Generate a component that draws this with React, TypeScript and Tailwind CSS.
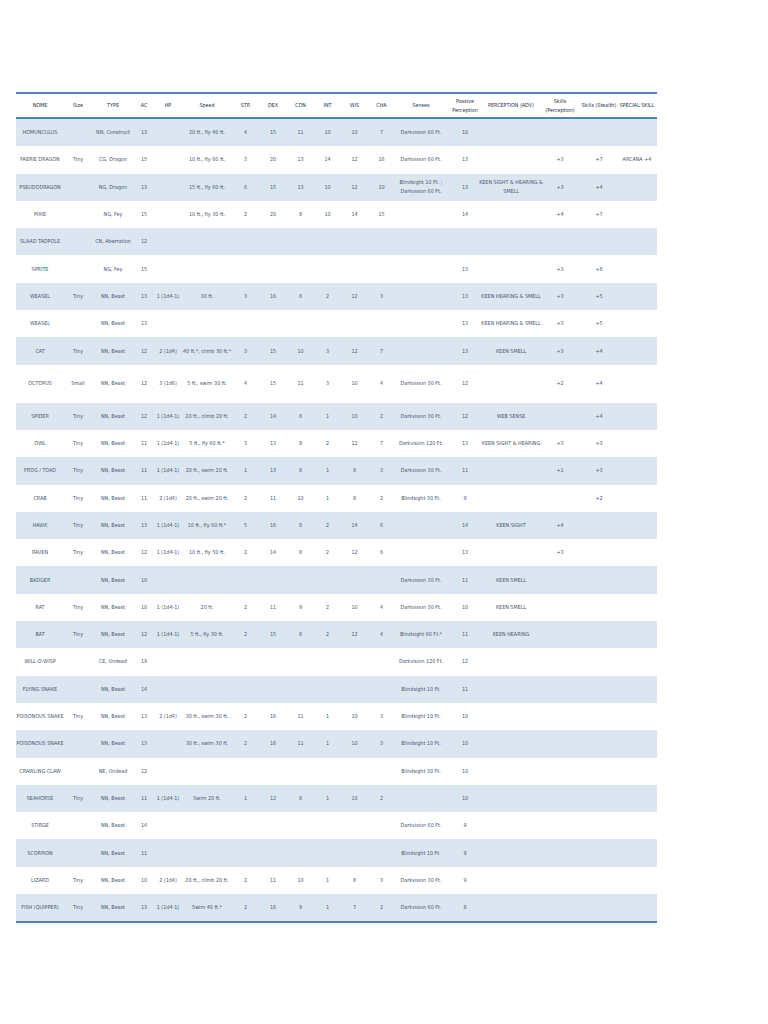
type Row = {
  name: string;
  size?: string;
  type: string;
  ac: string;
  hp?: string;
  speed?: string;
  stats?: string[];
  senses?: string[];
  pp?: string;
  adv?: string[];
  skp?: string;
  sks?: string;
  spec?: string;
  tall?: boolean;
};

const cols = "grid grid-cols-[48px_28px_42px_20px_28px_50px_27px_28px_27px_27px_27px_27px_52px_36px_56px_42px_36px_40px]";

const headers: string[][] = [
  ["NOME"], ["Size"], ["TYPE"], ["AC"], ["HP"], ["Speed"], ["STR"], ["DEX"], ["CON"], ["INT"], ["WIS"], ["CHA"],
  ["Senses"], ["Passive", "Perception"], ["PERCEPTION (ADV)"], ["Skills", "(Perception)"], ["Skills (Stealth)"], ["SPECIAL SKILL"],
];

const rows: Row[] = [
  { name: "HOMUNCULUS", type: "NN, Construct", ac: "13", speed: "20 ft., fly 40 ft.", stats: ["4", "15", "11", "10", "10", "7"], senses: ["Darkvision 60 Ft."], pp: "10" },
  { name: "FAERIE DRAGON", size: "Tiny", type: "CG, Dragon", ac: "15", speed: "10 ft., fly 60 ft.", stats: ["3", "20", "13", "14", "12", "16"], senses: ["Darkvision 60 Ft."], pp: "13", skp: "+3", sks: "+7", spec: "ARCANA +4" },
  { name: "PSEUDODRAGON", type: "NG, Dragon", ac: "13", speed: "15 ft., fly 60 ft.", stats: ["6", "15", "13", "10", "12", "10"], senses: ["Blindsight 10 Ft. ;", "Darkvision 60 Ft."], pp: "13", adv: ["KEEN SIGHT & HEARING &", "SMELL"], skp: "+3", sks: "+4" },
  { name: "PIXIE", type: "NG, Fey", ac: "15", speed: "10 ft., fly 30 ft.", stats: ["2", "20", "8", "10", "14", "15"], pp: "14", skp: "+4", sks: "+7" },
  { name: "SLAAD TADPOLE", type: "CN, Aberration", ac: "12" },
  { name: "SPRITE", type: "NG, Fey", ac: "15", pp: "13", skp: "+3", sks: "+8" },
  { name: "WEASEL", size: "Tiny", type: "NN, Beast", ac: "13", hp: "1 (1d4-1)", speed: "30 ft.", stats: ["3", "16", "8", "2", "12", "3"], pp: "13", adv: ["KEEN HEARING & SMELL"], skp: "+3", sks: "+5" },
  { name: "WEASEL", type: "NN, Beast", ac: "13", pp: "13", adv: ["KEEN HEARING & SMELL"], skp: "+3", sks: "+5" },
  { name: "CAT", size: "Tiny", type: "NN, Beast", ac: "12", hp: "2 (1d4)", speed: "40 ft.*, climb 30 ft.*", stats: ["3", "15", "10", "3", "12", "7"], pp: "13", adv: ["KEEN SMELL"], skp: "+3", sks: "+4" },
  { name: "OCTOPUS", size: "Small", type: "NN, Beast", ac: "12", hp: "3 (1d6)", speed: "5 ft., swim 30 ft.", stats: ["4", "15", "11", "3", "10", "4"], senses: ["Darkvision 30 Ft."], pp: "12", skp: "+2", sks: "+4", tall: true },
  { name: "SPIDER", size: "Tiny", type: "NN, Beast", ac: "12", hp: "1 (1d4-1)", speed: "20 ft., climb 20 ft.", stats: ["2", "14", "8", "1", "10", "2"], senses: ["Darkvision 30 Ft."], pp: "12", adv: ["WEB SENSE"], sks: "+4" },
  { name: "OWL", size: "Tiny", type: "NN, Beast", ac: "11", hp: "1 (1d4-1)", speed: "5 ft., fly 60 ft.*", stats: ["3", "13", "8", "2", "12", "7"], senses: ["Darkvision 120 Ft."], pp: "13", adv: ["KEEN SIGHT & HEARING"], skp: "+3", sks: "+3" },
  { name: "FROG / TOAD", size: "Tiny", type: "NN, Beast", ac: "11", hp: "1 (1d4-1)", speed: "20 ft., swim 20 ft.", stats: ["1", "13", "8", "1", "8", "3"], senses: ["Darkvision 30 Ft."], pp: "11", skp: "+1", sks: "+3" },
  { name: "CRAB", size: "Tiny", type: "NN, Beast", ac: "11", hp: "2 (1d4)", speed: "20 ft., swim 20 ft.", stats: ["2", "11", "10", "1", "8", "2"], senses: ["Blindsight 30 Ft."], pp: "9", sks: "+2" },
  { name: "HAWK", size: "Tiny", type: "NN, Beast", ac: "13", hp: "1 (1d4-1)", speed: "10 ft., fly 60 ft.*", stats: ["5", "16", "8", "2", "14", "6"], pp: "14", adv: ["KEEN SIGHT"], skp: "+4" },
  { name: "RAVEN", size: "Tiny", type: "NN, Beast", ac: "12", hp: "1 (1d4-1)", speed: "10 ft., fly 50 ft.", stats: ["2", "14", "8", "2", "12", "6"], pp: "13", skp: "+3" },
  { name: "BADGER", type: "NN, Beast", ac: "10", senses: ["Darkvision 30 Ft."], pp: "11", adv: ["KEEN SMELL"] },
  { name: "RAT", size: "Tiny", type: "NN, Beast", ac: "10", hp: "1 (1d4-1)", speed: "20 ft.", stats: ["2", "11", "9", "2", "10", "4"], senses: ["Darkvision 30 Ft."], pp: "10", adv: ["KEEN SMELL"] },
  { name: "BAT", size: "Tiny", type: "NN, Beast", ac: "12", hp: "1 (1d4-1)", speed: "5 ft., fly 30 ft.", stats: ["2", "15", "8", "2", "12", "4"], senses: ["Blindsight 60 Ft.*"], pp: "11", adv: ["KEEN HEARING"] },
  { name: "WILL-O-WISP", type: "CE, Undead", ac: "19", senses: ["Darkvision 120 Ft."], pp: "12" },
  { name: "FLYING SNAKE", type: "NN, Beast", ac: "14", senses: ["Blindsight 10 Ft."], pp: "11" },
  { name: "POISONOUS SNAKE", size: "Tiny", type: "NN, Beast", ac: "13", hp: "2 (1d4)", speed: "30 ft., swim 30 ft.", stats: ["2", "16", "11", "1", "10", "3"], senses: ["Blindsight 10 Ft."], pp: "10" },
  { name: "POISONOUS SNAKE", type: "NN, Beast", ac: "13", speed: "30 ft., swim 30 ft.", stats: ["2", "16", "11", "1", "10", "3"], senses: ["Blindsight 10 Ft."], pp: "10" },
  { name: "CRAWLING CLAW", type: "NE, Undead", ac: "12", senses: ["Blindsight 30 Ft."], pp: "10" },
  { name: "SEAHORSE", size: "Tiny", type: "NN, Beast", ac: "11", hp: "1 (1d4-1)", speed: "Swim 20 ft.", stats: ["1", "12", "8", "1", "10", "2"], pp: "10" },
  { name: "STIRGE", type: "NN, Beast", ac: "14", senses: ["Darkvision 60 Ft."], pp: "9" },
  { name: "SCORPION", type: "NN, Beast", ac: "11", senses: ["Blindsight 10 Ft."], pp: "9" },
  { name: "LIZARD", size: "Tiny", type: "NN, Beast", ac: "10", hp: "2 (1d4)", speed: "20 ft., climb 20 ft.", stats: ["2", "11", "10", "1", "8", "3"], senses: ["Darkvision 30 Ft."], pp: "9" },
  { name: "FISH (QUIPPER)", size: "Tiny", type: "NN, Beast", ac: "13", hp: "1 (1d4-1)", speed: "Swim 40 ft.*", stats: ["2", "16", "9", "1", "7", "2"], senses: ["Darkvision 60 Ft."], pp: "8" },
];

function Cell({ lines }: { lines?: string[] }) {
  return (
    <div className="flex flex-col items-center justify-center text-center leading-[9px] whitespace-nowrap">
      {lines?.map((l, i) => <span key={i}>{l}</span>)}
    </div>
  );
}

export default function App() {
  return (
    <div className="min-h-[1024px] w-[768px] bg-white pt-[92px] pl-[16px] font-['Liberation_Sans_Narrow','DejaVu_Sans_Condensed','Liberation_Sans',sans-serif] text-[5.4px] text-[#4a5670]">
      <div className="w-[641px]">
        <div className={`${cols} h-[27px] border-y-2 border-[#4f81bd] text-[#26324a]`}>
          {headers.map((h, i) => <Cell key={i} lines={h} />)}
        </div>
        {rows.map((r, i) => {
          const st = r.stats ?? ["", "", "", "", "", ""];
          const cells: (string[] | undefined)[] = [
            [r.name], [r.size ?? ""], [r.type], [r.ac], [r.hp ?? ""], [r.speed ?? ""],
            ...st.map((s) => [s]),
            r.senses, [r.pp ?? ""], r.adv, [r.skp ?? ""], [r.sks ?? ""], [r.spec ?? ""],
          ];
          return (
            <div
              key={i}
              className={`${cols} ${r.tall ? "h-[38px]" : "h-[27.3px]"} ${i % 2 === 0 ? "bg-[#dce6f1]" : "bg-white"}`}
            >
              {cells.map((c, j) => <Cell key={j} lines={c} />)}
            </div>
          );
        })}
        <div className="h-[2px] bg-[#4f81bd]" />
      </div>
    </div>
  );
}
